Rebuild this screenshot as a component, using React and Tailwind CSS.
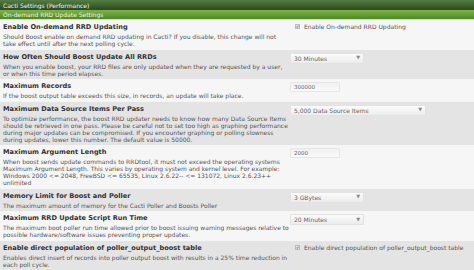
import React from 'react';

const rows = [
  {
    title: 'Enable On-demand RRD Updating',
    lines: [
      'Should Boost enable on demand RRD updating in Cacti? If you disable, this change will not',
      'take effect until after the next polling cycle.',
    ],
    control: { type: 'checkbox', label: 'Enable On-demand RRD Updating' },
  },
  {
    title: 'How Often Should Boost Update All RRDs',
    lines: [
      'When you enable boost, your RRD files are only updated when they are requested by a user,',
      'or when this time period elapses.',
    ],
    control: { type: 'select', value: '30 Minutes', width: 'w-[74px]' },
  },
  {
    title: 'Maximum Records',
    lines: ['If the boost output table exceeds this size, in records, an update will take place.'],
    control: { type: 'input', value: '300000' },
  },
  {
    title: 'Maximum Data Source Items Per Pass',
    lines: [
      'To optimize performance, the boost RRD updater needs to know how many Data Source Items',
      'should be retrieved in one pass. Please be careful not to set too high as graphing performance',
      'during major updates can be compromised. If you encounter graphing or polling slowness',
      'during updates, lower this number. The default value is 50000.',
    ],
    control: { type: 'select', value: '5,000 Data Source Items', width: 'w-[136px]' },
  },
  {
    title: 'Maximum Argument Length',
    lines: [
      'When boost sends update commands to RRDtool, it must not exceed the operating systems',
      'Maximum Argument Length. This varies by operating system and kernel level. For example:',
      'Windows 2000 <= 2048, FreeBSD <= 65535, Linux 2.6.22-- <= 131072, Linux 2.6.23++',
      'unlimited',
    ],
    control: { type: 'input', value: '2000' },
  },
  {
    title: 'Memory Limit for Boost and Poller',
    lines: ['The maximum amount of memory for the Cacti Poller and Boosts Poller'],
    control: { type: 'select', value: '3 GBytes', width: 'w-[74px]' },
  },
  {
    title: 'Maximum RRD Update Script Run Time',
    lines: [
      'The maximum boot poller run time allowed prior to boost issuing warning messages relative to',
      'possible hardware/software issues preventing proper updates.',
    ],
    control: { type: 'select', value: '20 Minutes', width: 'w-[74px]' },
  },
  {
    title: 'Enable direct population of poller_output_boost table',
    lines: [
      'Enables direct insert of records into poller output boost with results in a 25% time reduction in',
      'each poll cycle.',
    ],
    control: { type: 'checkbox', label: 'Enable direct population of poller_output_boost table' },
  },
];

function Control({ control }) {
  if (control.type === 'checkbox') {
    return (
      <div className="flex items-center gap-[4px] pl-[5px]">
        <span className="flex items-center justify-center w-[5px] h-[5px] bg-[#e4e4e4] border border-[#bbb]">
          <svg viewBox="0 0 10 10" className="w-[5px] h-[5px]">
            <path d="M1.5 5.5 L4 8 L8.5 2" stroke="#333" strokeWidth="2" fill="none" />
          </svg>
        </span>
        <span className="text-[6px] leading-[7px] text-[#555]">{control.label}</span>
      </div>
    );
  }
  if (control.type === 'select') {
    return (
      <div className={`${control.width} h-[11px] flex items-center justify-between px-[3px] rounded-[1px] border border-[#e2e2e2] bg-gradient-to-b from-[#fbfbfb] to-[#ececec]`}>
        <span className="text-[6px] text-[#666]">{control.value}</span>
        <span className="text-[5px] text-[#888]">▼</span>
      </div>
    );
  }
  return (
    <div className="w-[50px] h-[10px] flex items-center px-[3px] rounded-[1px] border border-[#e6e6e6] bg-gradient-to-b from-[#f0f0f0] to-[#fafafa]">
      <span className="text-[5.5px] text-[#666]">{control.value}</span>
    </div>
  );
}

export default function App() {
  return (
    <div className="w-[474px] h-[270px] overflow-hidden bg-[#e4e4e4] font-['DejaVu_Sans',sans-serif]">
      <div className="h-[10px] flex items-center px-[3px] bg-gradient-to-b from-[#557e43] to-[#2b4a1f] text-[6px] text-[#f2f2f2]">
        Cacti Settings (Performance)
      </div>
      <div className="h-[10px] flex items-center px-[3px] bg-gradient-to-b from-[#7eb34c] to-[#4c8a22] text-[6px] text-[#eef6e6] border-b border-[#d8d8d8]">
        On-demand RRD Update Settings
      </div>
      {rows.map((row, i) => (
        <div
          key={row.title}
          className={`flex ${i % 2 === 0 ? 'bg-[#f6f6f6]' : 'bg-[#e4e4e4]'}`}
        >
          <div className="w-[290px] shrink-0 px-[3px] pt-[3px] pb-[2.5px]">
            <div className="text-[6.6px] leading-[8px] font-bold text-[#333] whitespace-nowrap">{row.title}</div>
            <div className="mt-[2px] text-[6px] leading-[7px] text-[#555]">
              {row.lines.map((line) => (
                <div key={line} className="whitespace-nowrap">{line}</div>
              ))}
            </div>
          </div>
          <div className="flex-1 pt-[3px]">
            <Control control={row.control} />
          </div>
        </div>
      ))}
    </div>
  );
}
